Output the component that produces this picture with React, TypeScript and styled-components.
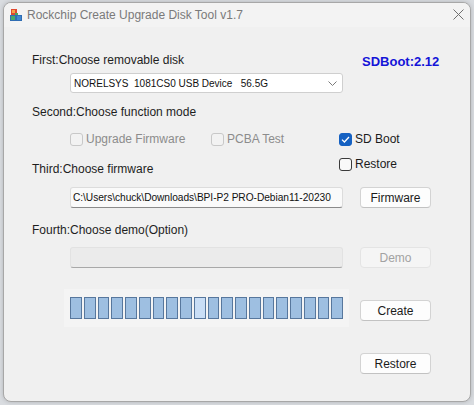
import { FC } from "react";
import styled, { createGlobalStyle } from "styled-components";

const GlobalStyle = createGlobalStyle`
  html, body {
    margin: 0;
    padding: 0;
  }
  body {
    width: 474px;
    height: 405px;
    overflow: hidden;
    background: #d9dce0;
    font-family: "Liberation Sans", Arial, sans-serif;
    color: #1b1b1b;
  }
`;

const blocks = Array.from({ length: 20 }, (_, i) => i);

const App: FC = () => {
  return (
    <>
      <GlobalStyle />
      <Window>
        <TitleBar>
          <AppIcon />
          <Title>Rockchip Create Upgrade Disk Tool v1.7</Title>
          <CloseIcon />
        </TitleBar>
        <Body>
          <Row $top={26}>
            <FieldLabel $width={330}>First:Choose removable disk</FieldLabel>
            <Version>SDBoot:2.12</Version>
          </Row>
          <Row $top={4} $indent={38}>
            <Select>
              <span>NORELSYS  1081CS0 USB Device   56.5G</span>
              <svg width="9" height="5" viewBox="0 0 9 5">
                <path d="M0.5 0.5 L4.5 4.5 L8.5 0.5" fill="none" stroke="#7a7a7a" strokeWidth="1" />
              </svg>
            </Select>
          </Row>
          <Row $top={12}>
            <FieldLabel>Second:Choose function mode</FieldLabel>
          </Row>
          <Row $top={13} $indent={38}>
            <Check label="Upgrade Firmware" disabled width={141} />
            <Check label="PCBA Test" disabled width={128} />
            <Check label="SD Boot" checked />
          </Row>
          <Row $top={11}>
            <FieldLabel $width={307} $offset={5}>Third:Choose firmware</FieldLabel>
            <Check label="Restore" />
          </Row>
          <Row $top={11} $indent={38}>
            <TextField>C:\Users\chuck\Downloads\BPI-P2 PRO-Debian11-20230</TextField>
            <Button $gap={17}>Firmware</Button>
          </Row>
          <Row $top={15}>
            <FieldLabel>Fourth:Choose demo(Option)</FieldLabel>
          </Row>
          <Row $top={10} $indent={38}>
            <TextField $disabled />
            <Button $gap={17} disabled>Demo</Button>
          </Row>
          <Row $top={21} $indent={32}>
            <ProgressPanel>
              {blocks.map((i) => (
                <Block key={i} $light={i === 9} />
              ))}
            </ProgressPanel>
            <Button $gap={11} $offset={11}>Create</Button>
          </Row>
          <Row $top={26} $indent={328}>
            <Button>Restore</Button>
          </Row>
        </Body>
      </Window>
    </>
  );
};

export default App;

interface CheckProps {
  label: string;
  checked?: boolean;
  disabled?: boolean;
  width?: number;
}

const Check: FC<CheckProps> = ({ label, checked, disabled, width }) => (
  <CheckItem $width={width} $disabled={disabled}>
    <CheckBox $checked={checked} $disabled={disabled}>
      {checked && (
        <svg width="9" height="7" viewBox="0 0 9 7">
          <path d="M1 3.6 L3.4 6 L8 1" fill="none" stroke="#fff" strokeWidth="1.3" />
        </svg>
      )}
    </CheckBox>
    {label}
  </CheckItem>
);

const AppIcon: FC = () => (
  <svg width="12" height="14" viewBox="0 0 12 14" style={{ flexShrink: 0 }}>
    <rect x="1" y="1" width="6" height="6" fill="#e0492f" />
    <rect x="2" y="2" width="3" height="3" fill="#f6a34a" />
    <rect x="5" y="5" width="3" height="2" fill="#4da35a" />
    <rect x="0" y="7" width="12" height="6" fill="#2f6db3" />
    <rect x="1" y="8" width="4" height="4" fill="#48a86a" />
    <rect x="7" y="8" width="4" height="4" fill="#3f86cf" />
  </svg>
);

const CloseIcon: FC = () => (
  <CloseWrap>
    <svg width="11" height="11" viewBox="0 0 11 11">
      <path d="M0.5 0.5 L10.5 10.5 M10.5 0.5 L0.5 10.5" stroke="#6f6f6f" strokeWidth="1" />
    </svg>
  </CloseWrap>
);

const Window = styled.div`
  margin: 2px 0 0 3px;
  width: 468px;
  height: 400px;
  box-sizing: border-box;
  border: 1px solid #a7a7a7;
  border-radius: 8px;
  background: #f0f0f0;
  overflow: hidden;
  display: flex;
  flex-direction: column;
  box-shadow: 0 0 4px rgba(0, 0, 0, 0.18);
`;

const TitleBar = styled.div`
  height: 24px;
  display: flex;
  align-items: center;
  padding-left: 6px;
  background: #f3f3f3;
`;

const Title = styled.div`
  margin-left: 5px;
  font-size: 12px;
  line-height: 14px;
  color: #7a7a7a;
  flex: 1;
`;

const CloseWrap = styled.div`
  display: flex;
  margin-right: 6px;
  margin-top: -2px;
`;

const Body = styled.div`
  padding-left: 28px;
  display: flex;
  flex-direction: column;
`;

interface RowProps {
  $top: number;
  $indent?: number;
}

const Row = styled.div<RowProps>`
  display: flex;
  align-items: flex-start;
  margin-top: ${(p) => p.$top}px;
  margin-left: ${(p) => p.$indent ?? 0}px;
`;

interface FieldLabelProps {
  $width?: number;
  $offset?: number;
}

const FieldLabel = styled.div<FieldLabelProps>`
  font-size: 12px;
  line-height: 14px;
  color: #1e1e1e;
  width: ${(p) => (p.$width ? `${p.$width}px` : "auto")};
  margin-top: ${(p) => p.$offset ?? 0}px;
  white-space: nowrap;
`;

const Version = styled.div`
  margin-top: 2px;
  font-size: 13px;
  line-height: 14px;
  font-weight: 700;
  color: #1414d8;
`;

const Select = styled.div`
  width: 273px;
  height: 20px;
  box-sizing: border-box;
  display: flex;
  align-items: center;
  justify-content: space-between;
  padding: 0 5px 0 3px;
  background: #ffffff;
  border: 1px solid #cfcfcf;
  border-radius: 3px;
  font-size: 10px;
  color: #111;
  white-space: pre;
`;

interface CheckItemProps {
  $width?: number;
  $disabled?: boolean;
}

const CheckItem = styled.div<CheckItemProps>`
  display: flex;
  align-items: center;
  gap: 3px;
  height: 14px;
  width: ${(p) => (p.$width ? `${p.$width}px` : "auto")};
  font-size: 12px;
  line-height: 14px;
  color: ${(p) => (p.$disabled ? "#8c8c8c" : "#1b1b1b")};
  white-space: nowrap;
`;

interface CheckBoxProps {
  $checked?: boolean;
  $disabled?: boolean;
}

const CheckBox = styled.span<CheckBoxProps>`
  width: 13px;
  height: 13px;
  box-sizing: border-box;
  display: flex;
  align-items: center;
  justify-content: center;
  border-radius: 3px;
  border: 1px solid
    ${(p) => (p.$checked ? "#1561c2" : p.$disabled ? "#c8c8c8" : "#3a3a3a")};
  background: ${(p) => (p.$checked ? "#1561c2" : p.$disabled ? "#f2f2f2" : "#f9f9f9")};
`;

interface TextFieldProps {
  $disabled?: boolean;
}

const TextField = styled.div<TextFieldProps>`
  width: 273px;
  height: 21px;
  box-sizing: border-box;
  padding: 0 2px;
  display: flex;
  align-items: center;
  overflow: hidden;
  white-space: nowrap;
  font-size: 10.2px;
  letter-spacing: -0.05px;
  color: #111;
  border: 1px solid ${(p) => (p.$disabled ? "#e2e2e2" : "#dcdcdc")};
  border-bottom: 1px solid ${(p) => (p.$disabled ? "#a8a8a8" : "#8a8a8a")};
  border-radius: 3px;
  background: ${(p) => (p.$disabled ? "#ebebeb" : "#fafafa")};
`;

interface ButtonProps {
  $offset?: number;
  $gap?: number;
}

const Button = styled.button<ButtonProps>`
  width: 71px;
  height: 21px;
  box-sizing: border-box;
  margin: ${(p) => p.$offset ?? 0}px 0 0 ${(p) => p.$gap ?? 0}px;
  padding: 0;
  font-family: "Liberation Sans", Arial, sans-serif;
  font-size: 12px;
  color: #1b1b1b;
  background: #fdfdfd;
  border: 1px solid #d3d3d3;
  border-bottom-color: #c2c2c2;
  border-radius: 4px;

  &:disabled {
    color: #a2a2a2;
    background: #f5f5f5;
    border-color: #e4e4e4;
  }
`;

const ProgressPanel = styled.div`
  width: 273px;
  display: flex;
  gap: 2px;
  padding: 8px 6px;
  background: #f4f4f4;
`;

interface BlockProps {
  $light: boolean;
}

const Block = styled.div<BlockProps>`
  flex: 1;
  height: 22px;
  box-sizing: border-box;
  border: 1px solid #57779d;
  background: ${(p) => (p.$light ? "#c9def6" : "#9ebfe1")};
`;
